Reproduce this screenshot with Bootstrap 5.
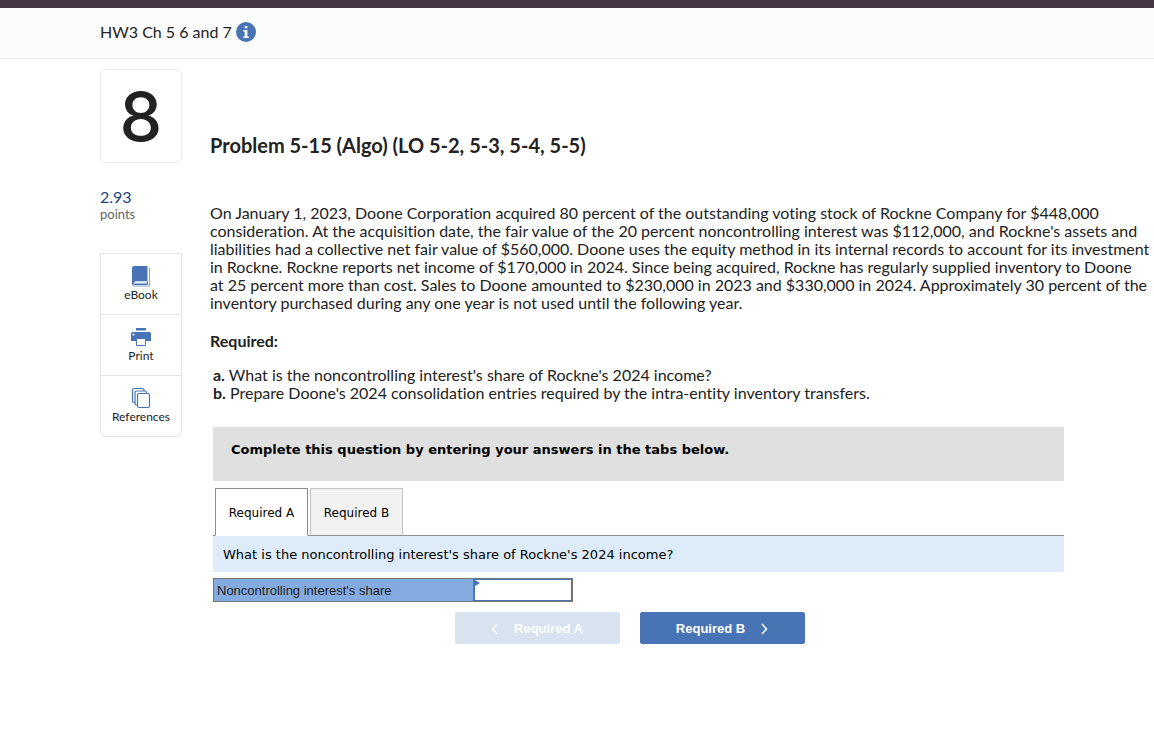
<!DOCTYPE html>
<html lang="en">
<head>
<meta charset="utf-8">
<meta name="viewport" content="width=device-width, initial-scale=1">
<title>HW3 Ch 5 6 and 7</title>
<link href="https://cdn.jsdelivr.net/npm/bootstrap@5.3.0/dist/css/bootstrap.min.css" rel="stylesheet">
<style>
body { font-family: Lato, sans-serif; font-size: 16px; line-height: 18px; font-variant-ligatures: none; color: #222; background: #fff; }
.top-strip { height: 8px; background: #463646; }
.page-head { height: 51px; padding: 0 100px 2px; gap: 4px; background: #fcfcfc; border-bottom: 1px solid #ebebeb; }
.page-head h1 { font-size: 16px; line-height: 18px; font-weight: 400; }
.info-btn { width: 20px; height: 20px; }
.page-body { padding: 10px 0 40px 100px; gap: 28px; }
.side { width: 82px; }
.q-number { height: 94px; font-family: Inter, sans-serif; font-size: 68px; font-weight: 500; line-height: 92px; border: 1px solid #ebebeb; border-radius: 6px; }
.pts { margin-top: 25px; color: #1f4484; }
.pts-label { font-size: 13px; line-height: 17px; color: #666; }
.tools { margin-top: 30px; --bs-list-group-border-color: #e4e4e4; --bs-list-group-border-radius: 6px; }
.tools .list-group-item { height: 61px; padding: 11px 0 0; font-size: 12px; line-height: 16px; color: #222; text-align: center; }
.tools .list-group-item:first-child { height: 62px; border-radius: 0; }
.tools svg { display: block; margin: 0 auto; }
.main { min-width: 0; }
.main h2 { margin: 65px 0 0; font-size: 20px; line-height: 22px; font-weight: 700; }
.story { margin: 48px 0 0; white-space: nowrap; }
.req-head { margin: 20px 0 0; font-size: 16px; line-height: 18px; font-weight: 700; }
.parts { margin: 16px 0 0 3px; }
.answer { margin: 25px 90px 0 3px; font-family: "DejaVu Sans", sans-serif; font-size: 13px; color: #000; }
.banner { height: 54px; padding: 14px 18px; background: #e0e0e0; font-weight: 700; }
.req-tabs { margin-top: 7px; padding-left: 2px; gap: 2px; border-bottom: 1px solid #8c8c8c; }
.req-tabs .nav-link { width: 93px; height: 48px; padding: 2px 0 0; font-size: 12px; color: #000; background: #f2f2f2; border: 1px solid #c4c4c4; border-bottom-color: #8c8c8c; border-radius: 0; }
.req-tabs .nav-link.active { color: #000; background: #fff; border-color: #8c8c8c #8c8c8c #fff; }
.prompt { height: 36px; padding: 10px; background: #deebf8; }
.sheet { margin-top: 6px; width: 360px; height: 24px; table-layout: fixed; font-family: "Liberation Sans", sans-serif; border-collapse: separate; border-spacing: 0; border: 1px solid #757575; }
.sheet th, .sheet td { padding: 0; height: 22px; }
.sheet th { width: 260px; padding: 2px 0 0 3px; border-right: 1px solid #757575; font-weight: 400; line-height: 16px; color: #222; background: #84abdf; }
.sheet td { position: relative; }
.sheet td::before { content: ""; position: absolute; left: 1px; top: 1px; border: solid transparent; border-width: 3px 0 3px 5px; border-left-color: #4874b5; }
.sheet input { display: block; width: 100%; height: 22px; border: 1px solid #4874b5; border-radius: 0; background: #fff; }
.step-row { margin: 10px 18px 0 0; gap: 20px; font-family: "Liberation Sans", sans-serif; }
.step { --bs-btn-bg: #4874b5; --bs-btn-border-color: #4874b5; --bs-btn-color: #fff; --bs-btn-hover-bg: #3b639d; --bs-btn-hover-color: #fff; --bs-btn-disabled-bg: #d9e3ef; --bs-btn-disabled-border-color: #d9e3ef; --bs-btn-disabled-color: #fff; --bs-btn-disabled-opacity: 1; width: 165px; height: 32px; padding: 2px 0 0; gap: 16px; font-size: 13px; font-weight: 700; border-radius: 2px; }
</style>
</head>
<body>
<div class="top-strip"></div>
<header class="page-head d-flex align-items-center">
  <h1 class="m-0">HW3 Ch 5 6 and 7</h1>
  <button type="button" class="info-btn btn p-0 border-0 d-flex" aria-label="Assignment information">
    <svg width="20" height="20" viewBox="0 0 20 20"><circle cx="10" cy="10" r="10" fill="#4874b5"/><path d="M8.700 4h2.700v2.300H8.700zM7.200 8h4.200v6.500h1.500v1.600H7.200v-1.600h1.500V9.600H7.200z" fill="#fff"/></svg>
  </button>
</header>
<div class="page-body d-flex">
  <aside class="side flex-shrink-0">
    <div class="q-number text-center">8</div>
    <div class="pts">2.93</div>
    <div class="pts-label">points</div>
    <nav class="tools list-group" aria-label="Resources">
      <a class="list-group-item list-group-item-action" href="#"><svg width="20" height="22" viewBox="0 0 20 22"><path d="M3 1h13.500v15.500H4a1.800 1.800 0 0 0-1.500 1V20H1V3a2 2 0 0 1 2-2z" fill="#4874b5"/><path d="M16.500 16.500v3H4a1.500 1.500 0 0 1 0-3" fill="#fff" stroke="#4874b5"/><path d="M4 18.300h12M18.500 3v18H3.500A2.500 2.500 0 0 1 1.500 19" fill="none" stroke="#88a4cf"/></svg>eBook</a>
      <a class="list-group-item list-group-item-action" href="#"><svg width="20" height="22" viewBox="0 0 20 22"><path d="M5 2h10v2.500H5zM1.500 6h17A1.500 1.500 0 0 1 20 7.500V15H0V7.500A1.500 1.500 0 0 1 1.500 6z" fill="#4874b5"/><path d="M5.500 12.500h9v7h-9z" fill="#fff" stroke="#4874b5"/><circle cx="2.500" cy="8.500" r="1.100" fill="#fff"/></svg>Print</a>
      <a class="list-group-item list-group-item-action" href="#"><svg width="20" height="22" viewBox="0 0 20 22"><g fill="#fff" stroke="#4874b5" stroke-width="1.200"><rect x="1.500" y="1.500" width="11.500" height="14" rx="1.500"/><rect x="4" y="4" width="11.500" height="14" rx="1.500"/><rect x="6.500" y="6.500" width="12" height="14" rx="1.500"/></g></svg>References</a>
    </nav>
  </aside>
  <main class="main flex-grow-1">
    <h2>Problem 5-15 (Algo) (LO 5-2, 5-3, 5-4, 5-5)</h2>
    <p class="story">On January 1, 2023, Doone Corporation acquired 80 percent of the outstanding voting stock of Rockne Company for $448,000<br>
consideration. At the acquisition date, the fair value of the 20 percent noncontrolling interest was $112,000, and Rockne's assets and<br>
liabilities had a collective net fair value of $560,000. Doone uses the equity method in its internal records to account for its investment<br>
in Rockne. Rockne reports net income of $170,000 in 2024. Since being acquired, Rockne has regularly supplied inventory to Doone<br>
at 25 percent more than cost. Sales to Doone amounted to $230,000 in 2023 and $330,000 in 2024. Approximately 30 percent of the<br>
inventory purchased during any one year is not used until the following year.</p>
    <h3 class="req-head">Required:</h3>
    <div class="parts"><b>a.</b> What is the noncontrolling interest's share of Rockne's 2024 income?<br><b>b.</b> Prepare Doone's 2024 consolidation entries required by the intra-entity inventory transfers.</div>
    <section class="answer">
      <div class="banner">Complete this question by entering your answers in the tabs below.</div>
      <div class="req-tabs nav nav-tabs" role="tablist">
        <button type="button" class="nav-link active" role="tab" aria-selected="true">Required A</button>
        <button type="button" class="nav-link" role="tab" aria-selected="false">Required B</button>
      </div>
      <div class="prompt">What is the noncontrolling interest's share of Rockne's 2024 income?</div>
      <table class="sheet">
        <tr><th scope="row"><label for="share">Noncontrolling interest's share</label></th><td><input id="share" type="text"></td></tr>
      </table>
      <div class="step-row d-flex justify-content-center">
        <button type="button" class="step btn d-flex align-items-center justify-content-center" disabled><svg width="7" height="12" viewBox="0 0 7 12" fill="none" stroke="#fff" stroke-width="1.500"><path d="M6 1 1.500 6 6 11"/></svg>Required A</button>
        <button type="button" class="step btn d-flex align-items-center justify-content-center">Required B<svg width="7" height="12" viewBox="0 0 7 12" fill="none" stroke="#fff" stroke-width="1.500"><path d="M1 1 5.500 6 1 11"/></svg></button>
      </div>
    </section>
  </main>
</div>
<script src="https://cdn.jsdelivr.net/npm/bootstrap@5.3.0/dist/js/bootstrap.bundle.min.js"></script>
</body>
</html>
